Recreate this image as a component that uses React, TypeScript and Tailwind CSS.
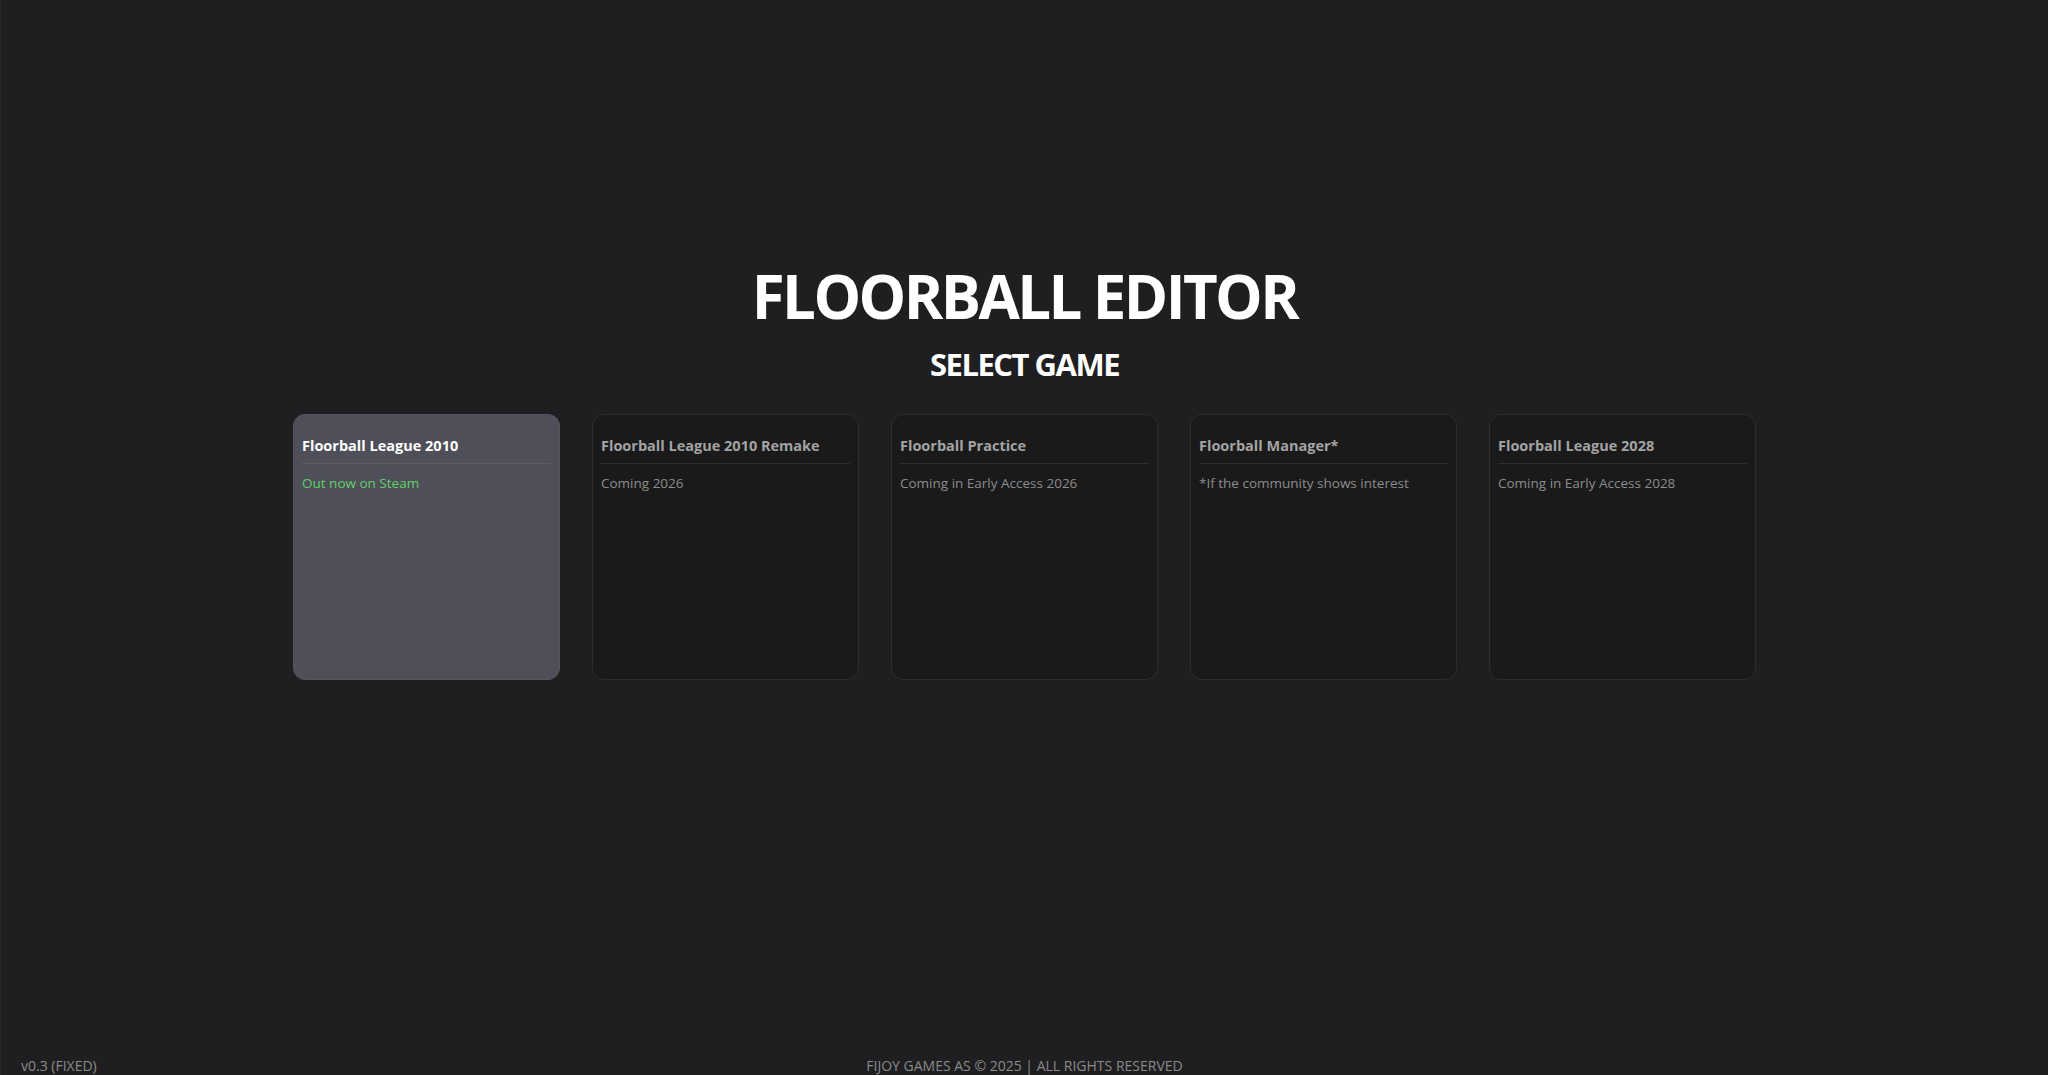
import React from 'react';

type Game = {
    title: string;
    note: string;
    active?: boolean;
};

const games: Game[] = [
    { title: 'Floorball League 2010', note: 'Out now on Steam', active: true },
    { title: 'Floorball League 2010 Remake', note: 'Coming 2026' },
    { title: 'Floorball Practice', note: 'Coming in Early Access 2026' },
    { title: 'Floorball Manager*', note: '*If the community shows interest' },
    { title: 'Floorball League 2028', note: 'Coming in Early Access 2028' },
];

const GameCard = ({ game }: { game: Game }) => {
    const box = game.active
        ? 'bg-[#4f4f5a] border-[#55555f]'
        : 'bg-[#1a1a1b] border-[#2e2e31]';
    const title = game.active ? 'text-white' : 'text-[#a3a3a3]';
    const note = game.active ? 'text-[#5fd068]' : 'text-[#8c8c8c]';
    const rule = game.active ? 'border-[#5d5d68]' : 'border-[#2f2f31]';

    return (
        <div className={`w-[267px] h-[266px] rounded-xl border px-2 pt-[21px] ${box}`}>
            <h3 className={`text-[14.5px] leading-5 font-bold pb-[7px] border-b ${title} ${rule}`}>
                {game.title}
            </h3>
            <p className={`mt-[10px] text-[13.5px] leading-[18px] ${note}`}>{game.note}</p>
        </div>
    );
};

export default function App() {
    return (
        <div className="min-h-[1075px] h-screen flex flex-col bg-[#1f1f21] border-l border-[#2a2a2d] font-['Open_Sans','Noto_Sans',sans-serif]">
            {/* Main */}
            <main className="flex-1 flex flex-col items-center pt-[266px]">
                <h1 className="text-[60px] leading-none font-bold text-white tracking-[-2.6px]">
                    FLOORBALL EDITOR
                </h1>
                <h2 className="mt-[23px] text-[31px] leading-none font-bold text-white tracking-[-1.5px]">
                    SELECT GAME
                </h2>

                <div className="mt-[34px] flex justify-center gap-8">
                    {games.map((g) => (
                        <GameCard key={g.title} game={g} />
                    ))}
                </div>
            </main>

            {/* Footer */}
            <footer className="grid grid-cols-3 items-end px-[20px] text-[14px] leading-[19px] text-[#8a8a8a]">
                <span>v0.3 (FIXED)</span>
                <span className="text-center whitespace-nowrap">FIJOY GAMES AS © 2025 | ALL RIGHTS RESERVED</span>
                <span />
            </footer>
        </div>
    );
}
